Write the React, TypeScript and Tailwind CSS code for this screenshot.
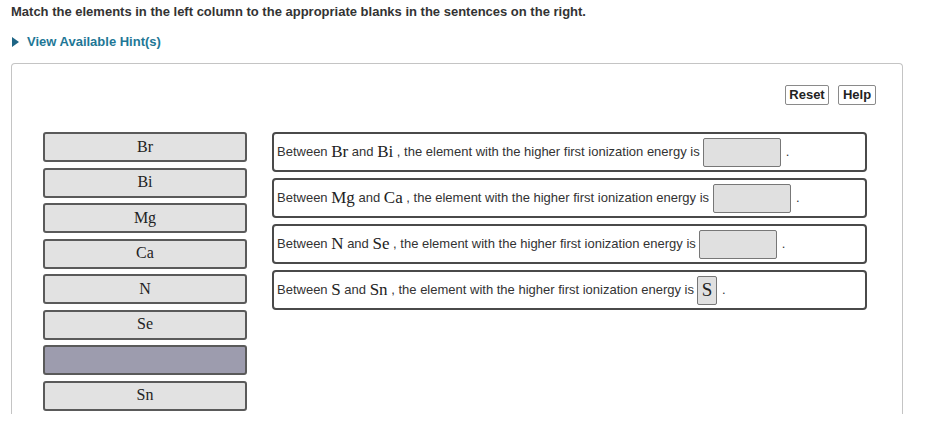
import React from "react";

const sans = { fontFamily: '"Liberation Sans", Arial, sans-serif' };
const serif = { fontFamily: '"Liberation Serif", "DejaVu Serif", serif' };

const items = ["Br", "Bi", "Mg", "Ca", "N", "Se", "", "Sn"];

interface Sentence {
  a: string;
  b: string;
  filled?: string;
  gap: string;
}

const sentences: Sentence[] = [
  { a: "Br", b: "Bi", gap: "ml-[3px]" },
  { a: "Mg", b: "Ca", gap: "ml-[4px]" },
  { a: "N", b: "Se", gap: "ml-[3px]" },
  { a: "S", b: "Sn", filled: "S", gap: "ml-[3px]" },
];

function Element({ name }: { name: string }) {
  return (
    <span style={serif} className="text-[17px] text-[#222]">
      {name}
    </span>
  );
}

function SentenceRow({ s }: { s: Sentence }) {
  return (
    <div className="flex h-[40px] items-center rounded-[4px] border-2 border-[#4a4a4a] bg-white pl-[3px]">
      <span style={sans} className="whitespace-pre text-[13px] text-[#333]">
        Between{" "}
      </span>
      <Element name={s.a} />
      <span style={sans} className="whitespace-pre text-[13px] text-[#333]">
        {" "}and{" "}
      </span>
      <Element name={s.b} />
      <span style={sans} className="whitespace-pre text-[13px] text-[#333]">
        {" "}, the element with the higher first ionization energy is
      </span>
      {s.filled ? (
        <span
          style={serif}
          className={`${s.gap} flex h-[29px] w-[20px] items-center justify-center rounded-[2px] border border-[#777] bg-[#e0e0e0] text-[19px] text-[#222]`}
        >
          {s.filled}
        </span>
      ) : (
        <span
          className={`${s.gap} h-[29px] w-[78px] rounded-[2px] border border-[#777] bg-[#e0e0e0]`}
        />
      )}
      <span style={sans} className="ml-[5px] text-[13px] text-[#333]">
        .
      </span>
    </div>
  );
}

export default function App() {
  return (
    <div className="h-[426px] w-[935px] overflow-hidden bg-white" style={sans}>
      <div className="pl-[11px] pt-[4px] text-[13px] font-bold leading-[16px] text-[#333]">
        Match the elements in the left column to the appropriate blanks in the sentences on the right.
      </div>

      <div className="mt-[14px] flex items-center pl-[12px]">
        <svg width="7" height="10" viewBox="0 0 7 10">
          <path d="M0 0 L7 5 L0 10 Z" fill="#1e6585" />
        </svg>
        <span className="ml-[8px] text-[13px] font-bold leading-[16px] text-[#1e7796]">
          View Available Hint(s)
        </span>
      </div>

      <div className="ml-[11px] mt-[13px] h-[351px] w-[892px] rounded-t-[4px] border border-b-0 border-[#c4c4c4]">
        <div className="flex justify-end gap-[9px] pr-[26px] pt-[21px]">
          <button className="h-[20px] w-[44px] rounded-[2px] border border-[#8a8a8a] bg-white text-[13px] font-bold leading-[18px] text-[#222]">
            Reset
          </button>
          <button className="h-[20px] w-[38px] rounded-[2px] border border-[#8a8a8a] bg-white text-[13px] font-bold leading-[18px] text-[#222]">
            Help
          </button>
        </div>

        <div className="mt-[27px] flex pl-[31px]">
          <div className="flex w-[204px] flex-col gap-[5.5px]">
            {items.map((it, i) =>
              it ? (
                <div
                  key={i}
                  className="flex h-[30px] items-center justify-center rounded-[3px] border-2 border-[#5a5a5a] bg-[#e2e2e2] pb-[1px]"
                >
                  <span style={serif} className="text-[16px] text-[#222]">
                    {it}
                  </span>
                </div>
              ) : (
                <div
                  key={i}
                  className="h-[30px] rounded-[3px] border-2 border-[#5a5a5a] bg-[#9d9cae]"
                />
              )
            )}
          </div>

          <div className="ml-[25px] flex w-[595px] flex-col gap-[6px]">
            {sentences.map((s, i) => (
              <SentenceRow key={i} s={s} />
            ))}
          </div>
        </div>
      </div>
    </div>
  );
}
